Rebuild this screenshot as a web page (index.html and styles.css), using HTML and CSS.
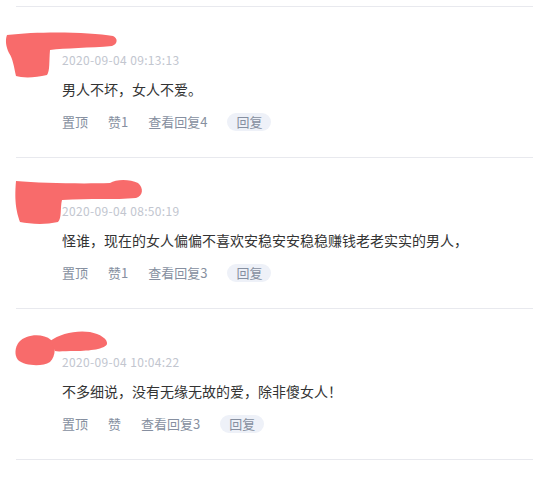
FILE: index.html
```html
<!DOCTYPE html>
<html lang="zh-CN">
<head>
    <meta charset="UTF-8">
    <meta name="viewport" content="width=device-width, initial-scale=1.0">
    <title>评论</title>
    <link rel="stylesheet" href="styles.css">
</head>
<body>

    <div class="comment-list">
        <div class="comment">
            <svg class="redact" width="160" height="80" viewBox="0 0 160 80">
                <path d="M7 28 C 40 24, 90 25, 113 29 C 118 31, 118 37, 112 39 C 90 41, 65 41, 50 43 C 49 55, 50 64, 47 68 C 35 71, 22 71, 16 69 C 14 60, 13 52, 9 46 C 6 40, 5 33, 7 28 Z"/>
            </svg>
            <div class="time">2020-09-04 09:13:13</div>
            <div class="content">男人不坏，女人不爱。</div>
            <div class="actions">
                <span>置顶</span>
                <span>赞1</span>
                <span>查看回复4</span>
                <span class="reply">回复</span>
            </div>
        </div>

        <div class="comment">
            <svg class="redact" width="160" height="80" viewBox="0 0 160 80">
                <path d="M16 23 C 40 25, 80 26, 110 25 C 116 21, 130 21, 138 25 C 144 30, 143 38, 136 40 C 115 42, 90 40, 62 42 C 60 50, 62 60, 58 64 C 45 67, 30 66, 20 64 C 17 55, 14 45, 16 23 Z"/>
            </svg>
            <div class="time">2020-09-04 08:50:19</div>
            <div class="content">怪谁，现在的女人偏偏不喜欢安稳安安稳稳赚钱老老实实的男人，</div>
            <div class="actions">
                <span>置顶</span>
                <span>赞1</span>
                <span>查看回复3</span>
                <span class="reply">回复</span>
            </div>
        </div>

        <div class="comment">
            <svg class="redact" width="160" height="80" viewBox="0 0 160 80">
                <path d="M19 33 C 26 25, 43 24, 51 31 C 56 36, 56 47, 50 53 C 42 58, 25 57, 18 51 C 14 46, 15 38, 19 33 Z"/>
                <path d="M50 32 C 60 25, 75 21, 90 23 C 100 25, 108 30, 107 35 C 105 40, 90 42, 75 42 C 65 42, 58 43, 55 42 Z"/>
            </svg>
            <div class="time">2020-09-04 10:04:22</div>
            <div class="content">不多细说，没有无缘无故的爱，除非傻女人！</div>
            <div class="actions">
                <span>置顶</span>
                <span>赞</span>
                <span>查看回复3</span>
                <span class="reply">回复</span>
            </div>
        </div>
    </div>

</body>
</html>
```

FILE: styles.css
```css
* {
    margin: 0;
    padding: 0;
    box-sizing: border-box;
}

body {
    font-family: "Noto Sans CJK SC", "Noto Sans", sans-serif;
    background-color: #fff;
    color: #333;
    padding-top: 6px;
}

.comment-list {
    margin-left: 16px;
    border-bottom: 1px solid #e8e9ee;
}

.comment {
    position: relative;
    border-top: 1px solid #e8e9ee;
    padding: 44px 0 26px 46px;
}

.redact {
    position: absolute;
    left: -16px;
    top: 0;
    fill: #f86b6b;
}

.time {
    font-size: 12px;
    line-height: 17px;
    letter-spacing: 0.35px;
    color: #c2c6cf;
}

.content {
    margin-top: 10px;
    font-size: 14px;
    line-height: 22px;
    color: #333;
}

.actions {
    margin-top: 13px;
    display: flex;
    align-items: center;
    gap: 20px;
    font-size: 13px;
    line-height: 18px;
    color: #868fa0;
}

.reply {
    background-color: #eef1f8;
    border-radius: 9px;
    padding: 0 9px;
}
```
